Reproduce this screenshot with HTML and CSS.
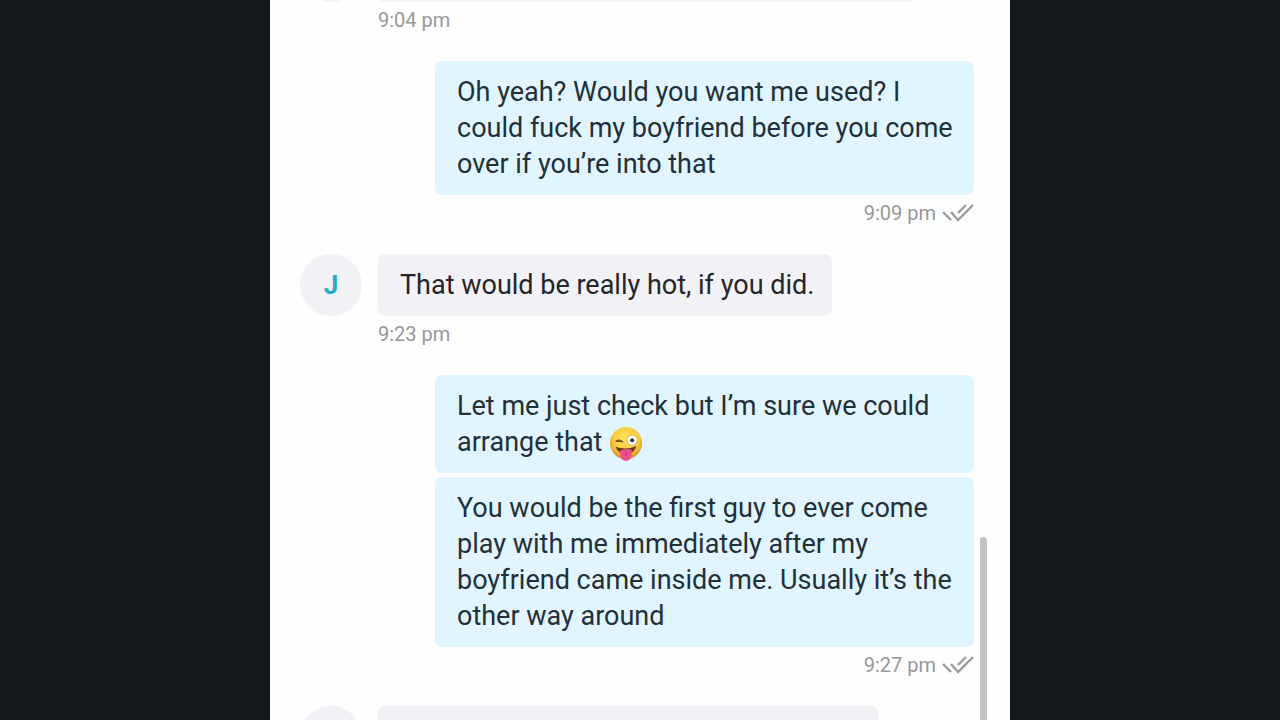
FILE: index.html
```
<!DOCTYPE html>
<html lang="en">
<head>
    <meta charset="UTF-8">
    <title>Chat</title>
    <link rel="stylesheet" href="styles.css">
</head>
<body>
<main class="chat">
    <!-- messages, scrolled part of the way down -->
    <div class="messages">
        <div class="group received">
            <span class="avatar"></span>
            <div class="content">
                <div class="bubble long"></div>
                <div class="time">9:04 pm</div>
            </div>
        </div>
        <div class="group sent">
            <p class="bubble">Oh yeah? Would you want me used? I could fuck my boyfriend before you come over if you’re into that</p>
            <div class="time">9:09 pm
                <svg class="ticks" viewBox="0 0 32 20"><path d="M1 9l8 8M9 9l7 8L31 2M16 10l8-8"/></svg>
            </div>
        </div>
        <div class="group received">
            <span class="avatar">J</span>
            <div class="content">
                <p class="bubble">That would be really hot, if you did.</p>
                <div class="time">9:23 pm</div>
            </div>
        </div>
        <div class="group sent">
            <p class="bubble">Let me just check but I’m sure we could arrange that
                <svg class="emoji" viewBox="0 0 36 36">
                    <defs>
                        <radialGradient id="face" cx="50%" cy="38%" r="60%">
                            <stop offset="0" stop-color="#ffe765"/>
                            <stop offset="0.65" stop-color="#fccb3c"/>
                            <stop offset="1" stop-color="#dc922b"/>
                        </radialGradient>
                    </defs>
                    <circle cx="18" cy="17" r="17" fill="url(#face)"/>
                    <path d="M7 15q4-3 8 1q-4-1-8-1z" fill="#7a4b16" stroke="#7a4b16" stroke-width="1"/>
                    <circle cx="24.500" cy="14" r="5.500" fill="#fff" stroke="#d8a040"/>
                    <circle cx="24.500" cy="14" r="2.200" fill="#3b3431"/>
                    <path d="M7 21q11 4 22-1q-2 8-11 8T7 21z" fill="#71371b"/>
                    <path d="M12 25q6-3 12-1v6q-1 6-6 6t-6-6z" fill="#ed4d91"/>
                    <path d="M18 26v5" stroke="#bd2d6c" stroke-width="1"/>
                </svg>
            </p>
            <p class="bubble">You would be the first guy to ever come play with me immediately after my boyfriend came inside me. Usually it’s the other way around</p>
            <div class="time">9:27 pm
                <svg class="ticks" viewBox="0 0 32 20"><path d="M1 9l8 8M9 9l7 8L31 2M16 10l8-8"/></svg>
            </div>
        </div>
        <div class="group received">
            <span class="avatar"></span>
            <div class="content">
                <div class="bubble medium"></div>
            </div>
        </div>
    </div>
    <div class="scrollbar"></div>
</main>
</body>
</html>
```
FILE: styles.css
```
* {
    box-sizing: border-box;
    margin: 0;
    padding: 0;
}

body {
    background: #13181d;
    font-family: Roboto, "Liberation Sans", sans-serif;
    color: #22303a;
    overflow: hidden;
}

.chat {
    position: relative;
    max-width: 740px;
    height: 100vh;
    margin: 0 auto;
    padding: 0 36px 0 30px;
    background: #fefefe;
    overflow: hidden;
}

/* the first message is scrolled out of view */
.messages {
    display: flex;
    flex-direction: column;
    gap: 23px;
    margin-top: -60px;
}

.group {
    display: flex;
}

.sent {
    flex-direction: column;
    align-items: flex-end;
    gap: 4px;
}

.received {
    gap: 16px;
}

.content {
    flex: 1;
}

.bubble {
    width: fit-content;
    max-width: 539px;
    min-height: 62px;
    padding: 13px 18px 13px 22px;
    border-radius: 7px;
    font-size: 27px;
    line-height: 36px;
}

.sent .bubble {
    background: #e0f5ff;
}

.received .bubble {
    background: #f2f1f6;
    color: #25252b;
}

.received .long {
    width: 539px;
}

.received .medium {
    width: 500px;
}

.avatar {
    flex: none;
    width: 62px;
    height: 62px;
    border-radius: 50%;
    background: #f2f1f6;
    color: #27acc6;
    font-size: 26px;
    font-weight: bold;
    line-height: 62px;
    text-align: center;
}

.time {
    display: flex;
    align-items: center;
    gap: 6px;
    font-size: 20px;
    line-height: 36px;
    color: #97979b;
}

.sent .time {
    margin-top: -4px;
}

.ticks {
    width: 32px;
    height: 20px;
    fill: none;
    stroke: #9c9ca0;
    stroke-width: 2.4;
}

.emoji {
    width: 34px;
    height: 34px;
    margin: -2px 0;
    vertical-align: middle;
}

.scrollbar {
    position: absolute;
    top: 537px;
    right: 23px;
    bottom: 0;
    width: 7px;
    border-radius: 4px 4px 0 0;
    background: #c3c3c3;
}
```
